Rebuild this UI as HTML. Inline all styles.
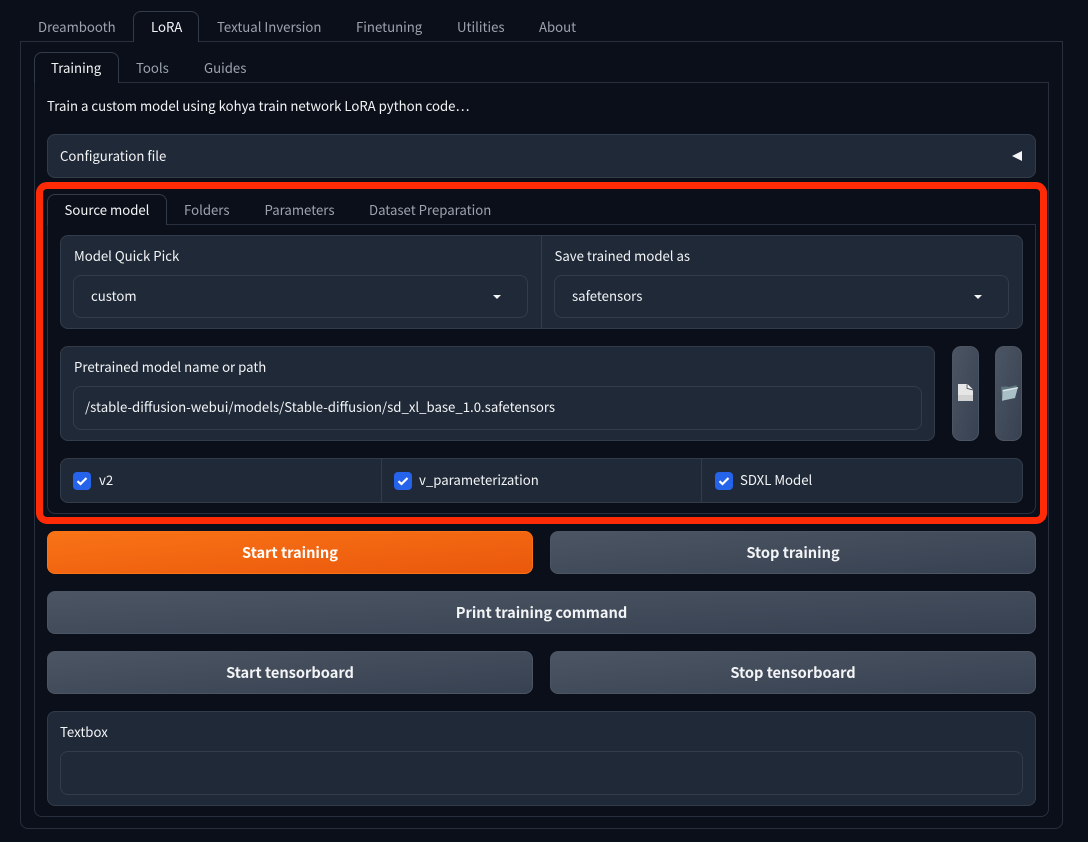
<!DOCTYPE html>
<html><head><meta charset="utf-8">
<style>
html,body{margin:0;padding:0;background:#0b0f19;}
body{width:1088px;height:842px;position:relative;overflow:hidden;font-family:"Noto Sans CJK JP","Liberation Sans",sans-serif;font-size:13.2px;color:#f3f4f6;}
.a{position:absolute;box-sizing:border-box;}
.t{position:absolute;white-space:nowrap;line-height:20px;}
.g{color:#9ca3af;}
.p{position:absolute;box-sizing:border-box;background:#1f2937;border:1px solid #333c4a;border-radius:8px;}
.i{position:absolute;box-sizing:border-box;background:#1f2937;border:1px solid #333c4a;border-radius:8px;}
.b{position:absolute;box-sizing:border-box;background:linear-gradient(to bottom right,#4b5563,#374151);border:1px solid #4b5563;border-radius:8px;font-weight:700;font-size:14.6px;text-align:center;line-height:42px;color:#f3f4f6;}
.tab{position:absolute;box-sizing:border-box;background:#0b0f19;border:1px solid #333c4a;border-bottom:0;border-radius:8px 8px 0 0;}
.cb{position:absolute;width:18px;height:18px;border-radius:4px;background:#2563eb;}
.d{position:absolute;width:0;height:0;border-left:4.5px solid transparent;border-right:4.5px solid transparent;border-top:4.5px solid #f3f4f6;}
</style></head><body>
<div class="a" style="left:20px;top:41px;width:1043px;height:788px;border:1px solid #283040;border-radius:0 0 8px 8px"></div>
<div class="tab" style="left:133px;top:11px;width:66px;height:31px"></div>
<div class="t g" style="left:38px;top:17px">Dreambooth</div>
<div class="t" style="left:151px;top:17px">LoRA</div>
<div class="t g" style="left:217px;top:17px">Textual Inversion</div>
<div class="t g" style="left:356px;top:17px">Finetuning</div>
<div class="t g" style="left:457px;top:17px">Utilities</div>
<div class="t g" style="left:539px;top:17px">About</div>

<div class="a" style="left:34px;top:82px;width:1015px;height:735px;border:1px solid #283040;border-radius:0 0 8px 8px"></div>
<div class="tab" style="left:34px;top:52px;width:85px;height:31px"></div>
<div class="t" style="left:51px;top:58px">Training</div>
<div class="t g" style="left:136px;top:58px">Tools</div>
<div class="t g" style="left:204px;top:58px">Guides</div>

<div class="t" style="left:47px;top:96px">Train a custom model using kohya train network LoRA python code…</div>

<div class="p" style="left:47px;top:134px;width:989px;height:44px"></div>
<div class="t" style="left:60px;top:146px">Configuration file</div>
<div class="a" style="left:1012px;top:151px;width:0;height:0;border-top:5px solid transparent;border-bottom:5px solid transparent;border-right:10px solid #f3f4f6"></div>

<div class="a" style="left:47px;top:224px;width:989px;height:290px;border:1px solid #283040;border-radius:0 0 8px 8px"></div>
<div class="tab" style="left:47px;top:194px;width:120px;height:31px"></div>
<div class="t" style="left:64.500px;top:200px">Source model</div>
<div class="t g" style="left:184px;top:200px">Folders</div>
<div class="t g" style="left:264.500px;top:200px">Parameters</div>
<div class="t g" style="left:369px;top:200px">Dataset Preparation</div>

<div class="p" style="left:60px;top:235px;width:963px;height:94px"></div>
<div class="a" style="left:541px;top:236px;width:1px;height:92px;background:#333c4a"></div>
<div class="t" style="left:74px;top:246px">Model Quick Pick</div>
<div class="i" style="left:73px;top:275px;width:455px;height:43px"></div>
<div class="t" style="left:91px;top:286px">custom</div>
<div class="d" style="left:493px;top:295px"></div>
<div class="t" style="left:554.500px;top:246px">Save trained model as</div>
<div class="i" style="left:554px;top:275px;width:455px;height:43px"></div>
<div class="t" style="left:572px;top:286px">safetensors</div>
<div class="d" style="left:974px;top:295px"></div>

<div class="p" style="left:60px;top:346px;width:875px;height:95px"></div>
<div class="t" style="left:74px;top:357px">Pretrained model name or path</div>
<div class="i" style="left:73px;top:386px;width:849px;height:44px"></div>
<div class="t" style="left:85px;top:397px">/stable-diffusion-webui/models/Stable-diffusion/sd_xl_base_1.0.safetensors</div>

<div class="b" style="left:952px;top:346px;width:27px;height:95px;border-radius:9px"></div>
<div class="b" style="left:995px;top:346px;width:27px;height:95px;border-radius:9px"></div>
<svg class="a" style="left:958px;top:384px" width="15" height="17" viewBox="0 0 15 17"><path d="M0 0H9V4.500L15 6.500V17H0Z" fill="#e6e6e6"/><path d="M9.500 0L15 5.500L9.500 4Z" fill="#f4f4f4"/><path d="M0 11H15V17H0Z" fill="#d2d2d2"/><path d="M9 .5V4.500L14 5.800" fill="none" stroke="#4a5058" stroke-width=".8"/></svg>
<svg class="a" style="left:1001px;top:385px" width="18" height="16" viewBox="0 0 18 16"><path d="M0 1.700L6 1.500L8 2L15.700 0V3L2 5L1 12Z" fill="#5f7680"/><path d="M1.700 5L17 2L14 13L1 15.700Z" fill="#a9c0c7"/><path d="M1.700 5L17 2L16.600 3.500L1.600 6.500Z" fill="#dbe6e9"/></svg>

<div class="p" style="left:60px;top:458px;width:963px;height:45px"></div>
<div class="a" style="left:381px;top:459px;width:1px;height:43px;background:#333c4a"></div>
<div class="a" style="left:701px;top:459px;width:1px;height:43px;background:#333c4a"></div>
<div class="cb" style="left:73px;top:472px"><svg width="18" height="18" viewBox="0 0 18 18" style="display:block"><path d="M4.500 9.200L7.500 12L13.500 6" fill="none" stroke="#fff" stroke-width="2.200"/></svg></div>
<div class="t" style="left:99px;top:470px">v2</div>
<div class="cb" style="left:394px;top:472px"><svg width="18" height="18" viewBox="0 0 18 18" style="display:block"><path d="M4.500 9.200L7.500 12L13.500 6" fill="none" stroke="#fff" stroke-width="2.200"/></svg></div>
<div class="t" style="left:419px;top:470px">v_parameterization</div>
<div class="cb" style="left:715px;top:472px"><svg width="18" height="18" viewBox="0 0 18 18" style="display:block"><path d="M4.500 9.200L7.500 12L13.500 6" fill="none" stroke="#fff" stroke-width="2.200"/></svg></div>
<div class="t" style="left:740px;top:470px">SDXL Model</div>

<div class="a" style="left:36px;top:182px;width:1011px;height:342px;border:7px solid #ff2a06;border-radius:11px"></div>

<div class="b" style="left:47px;top:531px;width:486px;height:43px;background:linear-gradient(to bottom right,#f97316,#ea580c);border-color:#f97316;color:#fff">Start training</div>
<div class="b" style="left:550px;top:531px;width:486px;height:43px">Stop training</div>
<div class="b" style="left:47px;top:591px;width:989px;height:43px">Print training command</div>
<div class="b" style="left:47px;top:651px;width:486px;height:43px">Start tensorboard</div>
<div class="b" style="left:550px;top:651px;width:486px;height:43px">Stop tensorboard</div>

<div class="p" style="left:47px;top:711px;width:989px;height:95px"></div>
<div class="t" style="left:60px;top:722px">Textbox</div>
<div class="i" style="left:60px;top:751px;width:963px;height:44px"></div>
</body></html>
